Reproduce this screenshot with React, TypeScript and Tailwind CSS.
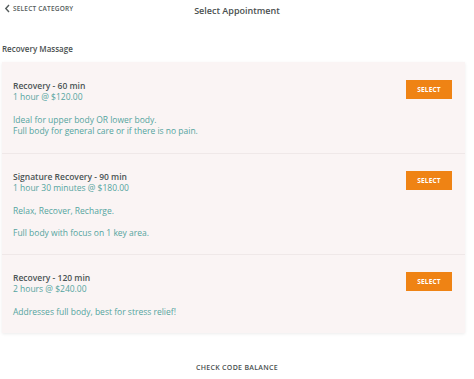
import React from 'react';

type Appointment = {
  name: string;
  detail: string;
  notes: string[][];
};

const appointments: Appointment[] = [
  {
    name: 'Recovery - 60 min',
    detail: '1 hour @ $120.00',
    notes: [['Ideal for upper body OR lower body.', 'Full body for general care or if there is no pain.']],
  },
  {
    name: 'Signature Recovery - 90 min',
    detail: '1 hour 30 minutes @ $180.00',
    notes: [['Relax, Recover, Recharge.'], ['Full body with focus on 1 key area.']],
  },
  {
    name: 'Recovery - 120 min',
    detail: '2 hours @ $240.00',
    notes: [['Addresses full body, best for stress relief!']],
  },
];

const App: React.FC = () => {
  return (
    <div className="w-[474px] h-[379px] bg-white flex flex-col" style={{ fontFamily: '"Open Sans", sans-serif' }}>
      <header className="relative h-[20px] flex items-center justify-center">
        <button className="absolute left-[4px] top-[4px] flex items-center gap-[2px] text-[6.5px] font-semibold tracking-[0.2px] text-[#555c5c]">
          <svg width="7" height="9" viewBox="0 0 7 9" fill="none">
            <path d="M5 1L1.8 4.5L5 8" stroke="#555c5c" strokeWidth="1.4" />
          </svg>
          SELECT CATEGORY
        </button>
        <h1 className="text-[9px] font-semibold text-[#4a5050] mt-[2px]">Select Appointment</h1>
      </header>

      <h2 className="mt-[23px] ml-[2px] text-[8px] font-semibold text-[#4a5050] leading-[11px]">Recovery Massage</h2>

      <div className="mt-[8px] ml-[2px] w-[463px] bg-[#faf4f4] shadow-[0_1px_3px_rgba(0,0,0,0.08)]">
        {appointments.map((a, i) => (
          <div
            key={a.name}
            className={
              'flex justify-between pl-[11px] pr-[13px] ' +
              (i === 0 ? 'pt-[18px] pb-[17px]' : 'pt-[17px] pb-[16px] border-t border-[#efe8e8]')
            }
          >
            <div className="text-[8.5px] leading-[11px]">
              <div className="font-semibold text-[#4b5555]">{a.name}</div>
              <div className="text-[#55a4a0]">{a.detail}</div>
              <div className="mt-[12px] flex flex-col gap-[11px] text-[#55a4a0]">
                {a.notes.map((p, j) => (
                  <p key={j}>
                    {p.map((l) => (
                      <span key={l} className="block">{l}</span>
                    ))}
                  </p>
                ))}
              </div>
            </div>
            <button className="w-[46px] h-[19px] bg-[#ef8314] text-white text-[6.5px] font-bold tracking-[0.2px]">SELECT</button>
          </div>
        ))}
      </div>

      <div className="mt-[30px] flex justify-center">
        <button className="text-[7px] font-semibold tracking-[0.3px] text-[#4a5050]">CHECK CODE BALANCE</button>
      </div>
    </div>
  );
};

export default App;
